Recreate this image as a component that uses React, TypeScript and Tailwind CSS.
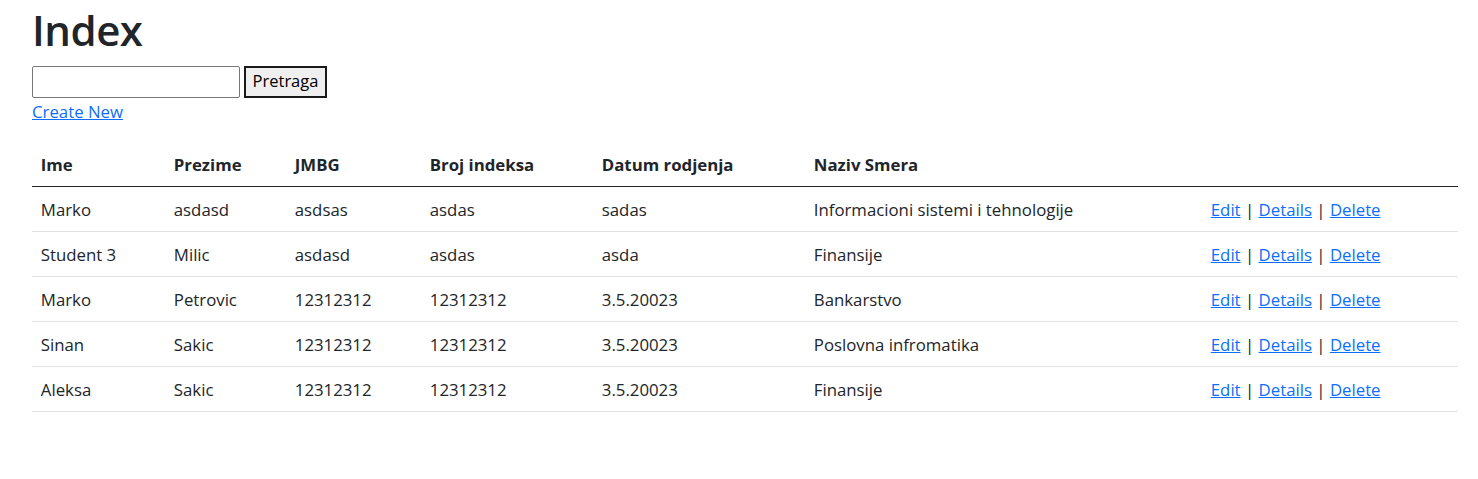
const students = [
  { ime: 'Marko', prezime: 'asdasd', jmbg: 'asdsas', indeks: 'asdas', datum: 'sadas', smer: 'Informacioni sistemi i tehnologije' },
  { ime: 'Student 3', prezime: 'Milic', jmbg: 'asdasd', indeks: 'asdas', datum: 'asda', smer: 'Finansije' },
  { ime: 'Marko', prezime: 'Petrovic', jmbg: '12312312', indeks: '12312312', datum: '3.5.20023', smer: 'Bankarstvo' },
  { ime: 'Sinan', prezime: 'Sakic', jmbg: '12312312', indeks: '12312312', datum: '3.5.20023', smer: 'Poslovna infromatika' },
  { ime: 'Aleksa', prezime: 'Sakic', jmbg: '12312312', indeks: '12312312', datum: '3.5.20023', smer: 'Finansije' },
]

const headers = ['Ime', 'Prezime', 'JMBG', 'Broj indeksa', 'Datum rodjenja', 'Naziv Smera', '']
const widths = ['w-[133px]', 'w-[121px]', 'w-[135px]', 'w-[172px]', 'w-[212px]', 'w-[397px]', 'w-[256px]']

export default function App() {
  return (
    <div className="min-h-screen bg-white text-[#212529] font-['Open_Sans',sans-serif] text-[16.8px] leading-[26.4px]">
      <main className="pl-[32px] pr-[20px] pt-[4px]">
        {/* Title */}
        <h1 className="text-[42px] leading-[52.8px] font-semibold tracking-[-0.5px] mb-[8.8px]">Index</h1>

        {/* Search */}
        <form className="flex items-center gap-[4px]" onSubmit={(e) => e.preventDefault()}>
          <input
            type="text"
            className="w-[208px] h-[32px] border border-[#767676] rounded-[2px] px-[2px] outline-none"
          />
          <button
            type="submit"
            className="h-[32px] w-[83px] border-2 border-[#1a1a1a] bg-[#efefef] text-black text-[16.5px] leading-none font-['Open_Sans',sans-serif]"
          >
            Pretraga
          </button>
        </form>

        <p className="pt-[1px] mb-[16.6px]">
          <a href="#" className="text-[#0d6efd] underline">Create New</a>
        </p>

        {/* Table */}
        <table className="table-fixed w-[1426px] border-collapse">
          <thead>
            <tr className="border-b border-[#212529]">
              {headers.map((h, i) => (
                <th key={i} className={`${widths[i]} text-left font-bold px-[8.8px] pt-[10.3px] pb-[7.3px]`}>
                  {h}
                </th>
              ))}
            </tr>
          </thead>
          <tbody>
            {students.map((s, i) => (
              <tr key={i} className="border-b border-[#dee2e6]">
                <td className="px-[8.8px] pt-[10.3px] pb-[7.3px]">{s.ime}</td>
                <td className="px-[8.8px] pt-[10.3px] pb-[7.3px]">{s.prezime}</td>
                <td className="px-[8.8px] pt-[10.3px] pb-[7.3px]">{s.jmbg}</td>
                <td className="px-[8.8px] pt-[10.3px] pb-[7.3px]">{s.indeks}</td>
                <td className="px-[8.8px] pt-[10.3px] pb-[7.3px]">{s.datum}</td>
                <td className="px-[8.8px] pt-[10.3px] pb-[7.3px] whitespace-nowrap">{s.smer}</td>
                <td className="px-[8.8px] pt-[10.3px] pb-[7.3px] whitespace-nowrap">
                  <a href="#" className="text-[#0d6efd] underline">Edit</a> |{' '}
                  <a href="#" className="text-[#0d6efd] underline">Details</a> |{' '}
                  <a href="#" className="text-[#0d6efd] underline">Delete</a>
                </td>
              </tr>
            ))}
          </tbody>
        </table>
      </main>
    </div>
  )
}
